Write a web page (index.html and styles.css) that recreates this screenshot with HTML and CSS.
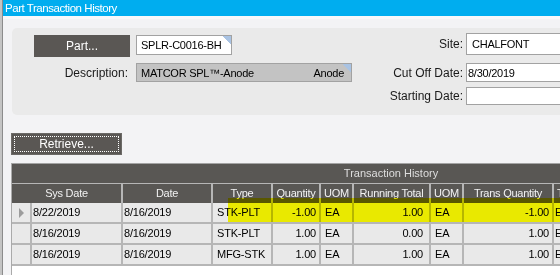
FILE: index.html
```html
<!DOCTYPE html>
<html>
<head>
<meta charset="utf-8">
<link rel="stylesheet" href="styles.css">
</head>
<body>
<div class="window">
  <div class="edge"></div>
  <div class="main">
    <div class="titlebar">Part Transaction History</div>
    <div class="content">
      <div class="groupbox">
        <div class="col-left">
          <div class="row row-part">
            <div class="btn btn-part">Part...</div>
            <div class="field field-part corner">SPLR-C0016-BH</div>
          </div>
          <div class="row row-desc">
            <div class="lbl lbl-desc">Description:</div>
            <div class="field field-desc corner"><span>MATCOR SPL™-Anode</span><span>Anode</span></div>
          </div>
        </div>
        <div class="col-right">
          <div class="row row-site">
            <div class="lbl lbl-right">Site:</div>
            <div class="field field-site">CHALFONT</div>
          </div>
          <div class="row row-cut">
            <div class="lbl lbl-right">Cut Off Date:</div>
            <div class="field field-cut">8/30/2019</div>
          </div>
          <div class="row row-start">
            <div class="lbl lbl-right">Starting Date:</div>
            <div class="field field-start"></div>
          </div>
        </div>
      </div>
      <div class="btn btn-retrieve"><span class="focus">Retrieve...</span></div>
      <div class="grid">
        <div class="gtitle">Transaction History</div>
        <div class="gcols ghead">
          <div class="h span2">Sys Date</div>
          <div class="h">Date</div>
          <div class="h">Type</div>
          <div class="h">Quantity</div>
          <div class="h">UOM</div>
          <div class="h">Running Total</div>
          <div class="h">UOM</div>
          <div class="h">Trans Quantity</div>
          <div class="h">Trans UOM</div>
          <div class="h"></div>
        </div>
        <div class="gcols grow">
          <div class="c rh"><svg width="6" height="10" viewBox="0 0 6 10"><path d="M0 0 L5 5 L0 10 Z" fill="#9c9c9c"/></svg></div>
          <div class="c l">8/22/2019</div>
          <div class="c l">8/16/2019</div>
          <div class="c l t">STK-PLT</div>
          <div class="c r">-1.00</div>
          <div class="c l u">EA</div>
          <div class="c r rt">1.00</div>
          <div class="c l u">EA</div>
          <div class="c r">-1.00</div>
          <div class="c l">EA</div>
          <div class="c"></div>
        </div>
        <div class="gcols grow">
          <div class="c rh"></div>
          <div class="c l">8/16/2019</div>
          <div class="c l">8/16/2019</div>
          <div class="c l t">STK-PLT</div>
          <div class="c r">1.00</div>
          <div class="c l u">EA</div>
          <div class="c r rt">0.00</div>
          <div class="c l u">EA</div>
          <div class="c r">1.00</div>
          <div class="c l">EA</div>
          <div class="c"></div>
        </div>
        <div class="gcols grow">
          <div class="c rh"></div>
          <div class="c l">8/16/2019</div>
          <div class="c l">8/16/2019</div>
          <div class="c l t">MFG-STK</div>
          <div class="c r">1.00</div>
          <div class="c l u">EA</div>
          <div class="c r rt">1.00</div>
          <div class="c l u">EA</div>
          <div class="c r">1.00</div>
          <div class="c l">EA</div>
          <div class="c"></div>
        </div>
      </div>
    </div>
  </div>
  <div class="highlight"></div>
</div>
</body>
</html>
```
FILE: styles.css
```css
html, body {
  margin: 0;
  padding: 0;
}
body {
  width: 560px;
  height: 275px;
  overflow: hidden;
  background: #f3f3f5;
  font-family: "Liberation Sans", Arial, sans-serif;
  color: #111;
}
.window {
  position: relative;
  display: flex;
  width: 560px;
  height: 275px;
  overflow: hidden;
}
.edge {
  flex: 0 0 2px;
  width: 2px;
  background: #c4c4c4;
  border-right: 1px solid #8c8c8c;
}
.main {
  flex: 1;
  min-width: 0;
  display: flex;
  flex-direction: column;
}
.titlebar {
  height: 16px;
  background: #00adef;
  color: #fff;
  font-size: 11.5px;
  letter-spacing: -0.45px;
  line-height: 16px;
  padding-left: 2px;
  white-space: nowrap;
}
.content {
  flex: 1;
  border-top: 3px solid #f8f8fa;
  padding-top: 9px;
}
.groupbox {
  margin-left: 9px;
  width: 640px;
  height: 87px;
  background: #eaeaea;
  border-radius: 5px 0 0 5px;
  display: flex;
}
.col-left {
  width: 340px;
  padding-left: 22px;
  padding-top: 7px;
  box-sizing: border-box;
}
.row {
  display: flex;
  align-items: center;
}
.btn {
  background: #5a5754;
  color: #fff;
  font-size: 12px;
  display: flex;
  align-items: center;
  justify-content: center;
  box-sizing: border-box;
}
.btn-part {
  width: 96px;
  height: 22px;
}
.field {
  box-sizing: border-box;
  border: 1px solid #a2a2a2;
  background: #fff;
  font-size: 11px;
  letter-spacing: -0.25px;
  color: #000;
  display: flex;
  align-items: center;
  white-space: nowrap;
}
.corner {
  background-image: linear-gradient(to bottom left, #a9c3e3 50%, transparent 50%);
  background-repeat: no-repeat;
  background-position: top right;
}
.field-part {
  margin-left: 6px;
  width: 96px;
  height: 20px;
  padding-left: 4px;
  background-size: 8px 8px;
  align-self: flex-start;
}
.row-desc {
  margin-top: 6px;
}
.lbl {
  font-size: 12px;
  color: #1a1a1a;
  white-space: nowrap;
}
.lbl-desc {
  width: 94px;
  text-align: right;
  padding-right: 8px;
}
.field-desc {
  width: 216px;
  height: 19px;
  background-color: #c3c3c3;
  justify-content: space-between;
  padding-left: 4px;
  padding-right: 7px;
  background-size: 9px 8px;
}
.col-right {
  padding-top: 5px;
}
.lbl-right {
  width: 111px;
  text-align: right;
  padding-right: 3px;
}
.field-site {
  width: 140px;
  height: 22px;
  padding-left: 5px;
}
.row-cut {
  margin-top: 8px;
}
.field-cut {
  width: 140px;
  height: 19px;
  padding-left: 1px;
}
.row-start {
  margin-top: 5px;
}
.field-start {
  width: 140px;
  height: 18px;
}
.btn-retrieve {
  margin-top: 18px;
  margin-left: 8px;
  width: 111px;
  height: 22px;
  border: 1px solid #6c6a67;
  padding: 2px;
}
.focus {
  flex: 1;
  align-self: stretch;
  border: 1px dotted #ffffff;
  display: flex;
  align-items: center;
  justify-content: center;
}
.grid {
  margin-top: 8px;
  margin-left: 8px;
  width: 760px;
  background: #fff;
  border-top: 1px solid #a3a3a3;
  border-left: 1px solid #aaaaaa;
  height: 120px;
}
.gtitle {
  height: 19px;
  background: #595754;
  color: #dedede;
  font-size: 11px;
  line-height: 19px;
  text-align: center;
  border-bottom: 1px solid #b6b6b6;
  padding-right: 2px;
}
.gcols {
  display: grid;
  grid-template-columns: 18px 89px 88px 58px 46px 31px 75px 31px 88px 60px 160px;
  column-gap: 2px;
  background: #b6b6b6;
}
.ghead {
  height: 19px;
}
.h {
  background: #595754;
  color: #f2f2f2;
  font-size: 11px;
  letter-spacing: -0.25px;
  line-height: 19px;
  text-align: center;
  white-space: nowrap;
  overflow: hidden;
}
.span2 {
  grid-column: span 2;
}
.grow {
  height: 21px;
  padding-bottom: 2px;
  box-sizing: border-box;
}
.c {
  background: #e9e9e9;
  font-size: 11px;
  letter-spacing: -0.2px;
  line-height: 19px;
  white-space: nowrap;
  overflow: hidden;
  color: #000;
}
.l {
  padding-left: 1px;
}
.t {
  padding-left: 4px;
}
.u {
  padding-left: 4px;
}
.r {
  text-align: right;
  padding-right: 3px;
}
.rt {
  padding-right: 6px;
}
.rh {
  display: flex;
  align-items: center;
  padding-left: 7px;
}
.highlight {
  position: absolute;
  left: 228px;
  top: 198px;
  width: 340px;
  height: 24px;
  background: #ffff00;
  mix-blend-mode: multiply;
  pointer-events: none;
}
```
